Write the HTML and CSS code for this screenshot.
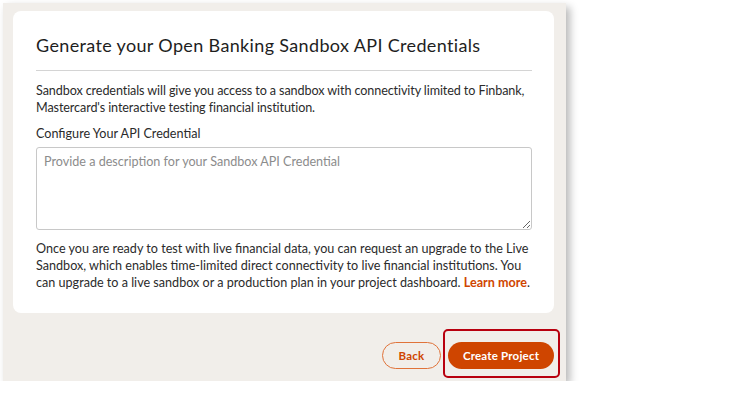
FILE: index.html
```html
<!DOCTYPE html>
<html>
<head>
<meta charset="utf-8">
<link rel="stylesheet" href="styles.css">
</head>
<body>
<div class="panel">
  <div class="card">
    <h1 class="title">Generate your Open Banking Sandbox API Credentials</h1>
    <div class="divider"></div>
    <p class="text intro">Sandbox credentials will give you access to a sandbox with connectivity limited to Finbank, Mastercard's interactive testing financial institution.</p>
    <label class="text label" for="desc">Configure Your API Credential</label>
    <textarea id="desc" class="desc" placeholder="Provide a description for your Sandbox API Credential"></textarea>
    <p class="text outro">Once you are ready to test with live financial data, you can request an upgrade to the Live Sandbox, which enables time-limited direct connectivity to live financial institutions. You can upgrade to a live sandbox or a production plan in your project dashboard. <a class="link" href="#">Learn more</a>.</p>
  </div>
  <div class="footer">
    <button class="btn btn-back">Back</button>
    <div class="create-wrap">
      <button class="btn btn-create">Create Project</button>
      <span class="highlight"></span>
    </div>
  </div>
</div>
</body>
</html>
```

FILE: styles.css
```css
html, body {
  margin: 0;
  padding: 0;
  background: #ffffff;
}
body {
  font-family: Lato, "Open Sans", sans-serif;
  color: #262626;
}
.panel {
  margin: 3px 0 0 3px;
  width: 563px;
  height: 378px;
  background: #f1eeea;
  box-shadow: 4px 4px 8px rgba(0, 0, 0, 0.28);
  box-sizing: border-box;
  padding: 8px 12px 0 10px;
  display: flex;
  flex-direction: column;
}
.card {
  background: #ffffff;
  border-radius: 8px;
  height: 302px;
  box-sizing: border-box;
  padding: 22px 22px 0 23px;
  display: flex;
  flex-direction: column;
}
.title {
  margin: 0;
  font-size: 18px;
  line-height: 24px;
  font-weight: 400;
  color: #1e1e1e;
  letter-spacing: 0.35px;
}
.divider {
  margin-top: 13px;
  height: 1px;
  background: #d4d4d4;
}
.text {
  font-size: 12.6px;
  line-height: 17px;
  color: #2b2b2b;
  margin: 0;
}
.intro {
  margin-top: 11px;
  letter-spacing: -0.1px;
}
.label {
  display: block;
  margin-top: 9px;
}
.desc {
  margin-top: 5px;
  height: 83px;
  box-sizing: border-box;
  border: 1px solid #c8c8c8;
  border-radius: 3px;
  padding: 5px 7px;
  font-family: Lato, "Open Sans", sans-serif;
  font-size: 12.6px;
  line-height: 17px;
  color: #333;
  resize: vertical;
  outline: none;
}
.desc::placeholder {
  color: #8c8c8c;
}
.outro {
  margin-top: 10px;
}
.link {
  color: #cf4500;
  font-weight: 700;
  text-decoration: none;
}
.footer {
  display: flex;
  justify-content: flex-end;
  align-items: center;
  gap: 7px;
  margin-top: 29px;
}
.btn {
  height: 27px;
  border-radius: 14px;
  font-family: Lato, "Open Sans", sans-serif;
  font-weight: 700;
  font-size: 11.5px;
  letter-spacing: 0.2px;
  padding: 0;
  cursor: pointer;
}
.btn-back {
  width: 59px;
  background: transparent;
  border: 1.5px solid #e0733a;
  color: #cf4500;
}
.create-wrap {
  position: relative;
  display: flex;
}
.btn-create {
  width: 106px;
  background: #cf4500;
  border: none;
  color: #ffffff;
}
.highlight {
  position: absolute;
  left: -5px;
  top: -13px;
  right: -6px;
  bottom: -9px;
  border: 2px solid #b8000f;
  border-radius: 5px;
  pointer-events: none;
}
```
